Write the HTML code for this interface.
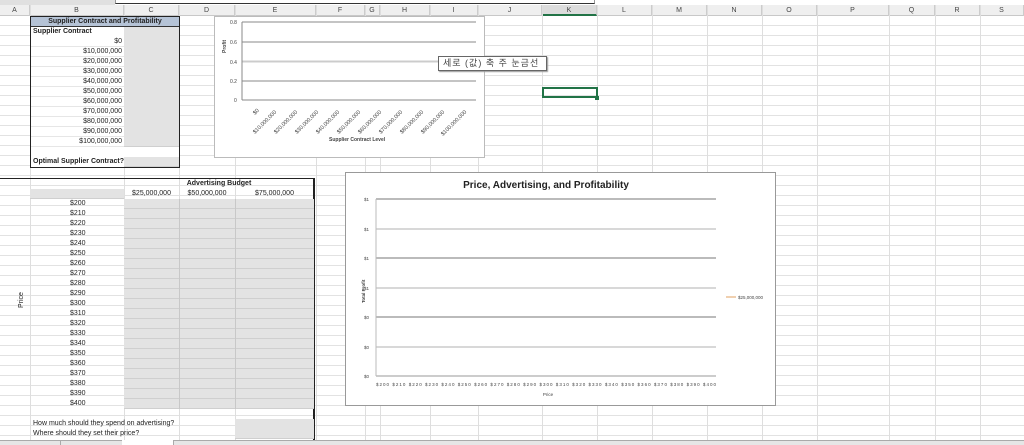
<!DOCTYPE html>
<html><head><meta charset="utf-8"><style>
*{margin:0;padding:0;box-sizing:border-box}
body{width:1024px;height:445px;overflow:hidden;position:relative;background:#fff;font-family:"Liberation Sans","Noto Sans CJK KR",sans-serif;font-size:7px;color:#222}
.a{position:absolute}
.grid{left:0;top:16px;width:1024px;height:424px;background:repeating-linear-gradient(to bottom,transparent 0,transparent 9px,#e2e2e2 9px,#e2e2e2 10px)}
.vl{position:absolute;top:5px;width:1px;height:435px;background:#dedede}
.hdr{left:0;top:5px;width:1024px;height:11px;background:#efefef;border-bottom:1px solid #c8c8c8}
.hc{position:absolute;top:5px;height:11px;font-size:7px;text-align:center;line-height:11px;color:#444;border-right:1px solid #ccc}
.g{background:#e3e3e3;border-bottom:1px solid #cfcfcf}
.r{text-align:right;font-size:7px;line-height:10px}
.c{text-align:center;font-size:7px;line-height:10px}
</style></head><body>
<div class="a hdr"></div>
<div class="a grid"></div>
<div class="hc" style="left:0;width:30px">A</div>
<div class="hc" style="left:30px;width:94px">B</div>
<div class="hc" style="left:124px;width:55px">C</div>
<div class="hc" style="left:179px;width:56px">D</div>
<div class="hc" style="left:235px;width:81px">E</div>
<div class="hc" style="left:316px;width:49px">F</div>
<div class="hc" style="left:365px;width:15px">G</div>
<div class="hc" style="left:380px;width:50px">H</div>
<div class="hc" style="left:430px;width:48px">I</div>
<div class="hc" style="left:478px;width:64px">J</div>
<div class="hc" style="left:542px;width:55px;background:#dcdcdc;border-bottom:2px solid #217346">K</div>
<div class="hc" style="left:597px;width:55px">L</div>
<div class="hc" style="left:652px;width:55px">M</div>
<div class="hc" style="left:707px;width:55px">N</div>
<div class="hc" style="left:762px;width:55px">O</div>
<div class="hc" style="left:817px;width:72px">P</div>
<div class="hc" style="left:889px;width:46px">Q</div>
<div class="hc" style="left:935px;width:45px">R</div>
<div class="hc" style="left:980px;width:44px">S</div>
<div class="vl" style="left:30px"></div><div class="vl" style="left:124px"></div><div class="vl" style="left:179px"></div><div class="vl" style="left:235px"></div><div class="vl" style="left:316px"></div><div class="vl" style="left:365px"></div><div class="vl" style="left:380px"></div><div class="vl" style="left:430px"></div><div class="vl" style="left:478px"></div><div class="vl" style="left:542px"></div><div class="vl" style="left:597px"></div><div class="vl" style="left:652px"></div><div class="vl" style="left:707px"></div><div class="vl" style="left:762px"></div><div class="vl" style="left:817px"></div><div class="vl" style="left:889px"></div><div class="vl" style="left:935px"></div><div class="vl" style="left:980px"></div>
<div class="a" style="left:115px;top:0;width:480px;height:4px;background:#fff;border-bottom:1px solid #333;border-left:1px solid #999;border-right:1px solid #999"></div>
<div class="a" style="left:0;top:0;width:115px;height:5px;background:#e0e0e0"></div>

<div class="a" style="left:30px;top:16px;width:150px;height:152px;background:#fff;border:1px solid #222"></div>
<div class="a" style="left:31px;top:17px;width:148px;height:10px;background:#b5c3d6;border-bottom:1px solid #333;font-weight:bold;text-align:center;line-height:10px;font-size:7px">Supplier Contract and Profitability</div>
<div class="a" style="left:31px;top:37px;width:93px;height:110px;background:repeating-linear-gradient(to bottom,transparent 0,transparent 9px,#e6e6e6 9px,#e6e6e6 10px)"></div>
<div class="a" style="left:33px;top:27px;font-weight:bold;line-height:10px">Supplier Contract</div>
<div class="a g" style="left:124px;top:27px;width:55px;height:120px"></div>
<div class="a g" style="left:124px;top:157px;width:55px;height:10px"></div>
<div class="a r" style="left:30px;top:37px;width:92px">$0<br>$10,000,000<br>$20,000,000<br>$30,000,000<br>$40,000,000<br>$50,000,000<br>$60,000,000<br>$70,000,000<br>$80,000,000<br>$90,000,000<br>$100,000,000</div>
<div class="a" style="left:33px;top:157px;font-weight:bold;line-height:10px">Optimal Supplier Contract?</div>

<div class="a" style="left:214px;top:16px;width:271px;height:142px;background:#fff;border:1px solid #bbb">
<svg width="271" height="142" style="position:absolute;left:0;top:0">
<g stroke="#888" stroke-width="1"><line x1="27" y1="5" x2="261" y2="5"/><line x1="27" y1="25" x2="261" y2="25"/><line x1="27" y1="44.5" x2="261" y2="44.5" stroke="#ccc" stroke-width="2"/><line x1="27" y1="64" x2="261" y2="64"/><line x1="27" y1="83" x2="261" y2="83"/><line x1="27" y1="5" x2="27" y2="83"/></g>
<g font-size="5" fill="#444" font-family="Liberation Sans"><text x="15" y="7">0.8</text><text x="15" y="27">0.6</text><text x="15" y="47">0.4</text><text x="15" y="66">0.2</text><text x="19" y="85">0</text>
<text transform="translate(11,36) rotate(-90)" font-weight="bold">Profit</text>
<text x="114" y="124" font-weight="bold">Supplier Contract Level</text>
<g font-size="5.5">
<text transform="translate(40,98) rotate(-45)">$0</text>
<text transform="translate(40,117) rotate(-45)">$10,000,000</text>
<text transform="translate(61,117) rotate(-45)">$20,000,000</text>
<text transform="translate(82,117) rotate(-45)">$30,000,000</text>
<text transform="translate(103,117) rotate(-45)">$40,000,000</text>
<text transform="translate(124,117) rotate(-45)">$50,000,000</text>
<text transform="translate(145,117) rotate(-45)">$60,000,000</text>
<text transform="translate(166,117) rotate(-45)">$70,000,000</text>
<text transform="translate(187,117) rotate(-45)">$80,000,000</text>
<text transform="translate(208,117) rotate(-45)">$90,000,000</text>
<text transform="translate(228,119) rotate(-45)">$100,000,000</text></g></g>
</svg></div>
<div class="a" style="left:438px;top:56px;width:109px;height:15px;background:#fff;border:1px solid #666;box-shadow:1px 1px 1px #999;font-size:9px;line-height:13px;padding-left:4px;color:#444;letter-spacing:1px">세로 (값) 축 주 눈금선</div>
<div class="a" style="left:542px;top:87px;width:56px;height:11px;border:2px solid #217346"></div>
<div class="a" style="left:595px;top:96px;width:4px;height:4px;background:#217346"></div>

<div class="a" style="left:0;top:178px;width:315px;height:262px;border-top:1px solid #222;border-right:2px solid #222"></div>
<div class="a" style="left:124px;top:179px;width:190px;text-align:center;font-weight:bold;line-height:10px">Advertising Budget</div>
<div class="a g" style="left:30px;top:189px;width:94px;height:10px"></div>
<div class="a c" style="left:124px;top:189px;width:55px">$25,000,000</div>
<div class="a c" style="left:179px;top:189px;width:56px">$50,000,000</div>
<div class="a c" style="left:235px;top:189px;width:79px">$75,000,000</div>
<div class="a" style="left:124px;top:199px;width:190px;height:210px;background:repeating-linear-gradient(to bottom,#e3e3e3 0,#e3e3e3 9px,#cfcfcf 9px,#cfcfcf 10px)"></div>
<div class="a" style="left:179px;top:199px;width:1px;height:210px;background:#c8c8c8"></div>
<div class="a" style="left:235px;top:199px;width:1px;height:210px;background:#c8c8c8"></div>
<div class="a" style="left:70px;top:199px;line-height:10px;font-size:7px">$200<br>$210<br>$220<br>$230<br>$240<br>$250<br>$260<br>$270<br>$280<br>$290<br>$300<br>$310<br>$320<br>$330<br>$340<br>$350<br>$360<br>$370<br>$380<br>$390<br>$400</div>
<div class="a" style="left:18px;top:308px;font-size:7px;transform:rotate(-90deg);transform-origin:left top">Price</div>
<div class="a" style="left:33px;top:419px;line-height:10px">How much should they spend on advertising?<br>Where should they set their price?</div>
<div class="a g" style="left:235px;top:419px;width:79px;height:20px"></div>

<div class="a" style="left:345px;top:172px;width:431px;height:234px;background:#fff;border:1px solid #999">
<svg width="431" height="234" style="position:absolute;left:0;top:0">
<g stroke-width="1"><line x1="30" y1="26" x2="370" y2="26" stroke="#777"/><line x1="30" y1="56" x2="370" y2="56" stroke="#ccc" stroke-width="1.5"/><line x1="30" y1="85" x2="370" y2="85" stroke="#777"/><line x1="30" y1="115" x2="370" y2="115" stroke="#ccc" stroke-width="1.5"/><line x1="30" y1="144" x2="370" y2="144" stroke="#777"/><line x1="30" y1="174" x2="370" y2="174" stroke="#ccc" stroke-width="1.5"/><line x1="30" y1="203" x2="370" y2="203" stroke="#999"/><line x1="30" y1="26" x2="30" y2="203" stroke="#bbb"/>
<line x1="380" y1="124" x2="390" y2="124" stroke="#e0a060"/></g>
<text x="200" y="15" font-size="10" font-weight="bold" text-anchor="middle" fill="#222" font-family="Liberation Sans">Price, Advertising, and Profitability</text>
<g font-size="4.5" fill="#444" font-family="Liberation Sans"><text x="18" y="28">$1</text><text x="18" y="58">$1</text><text x="18" y="87">$1</text><text x="18" y="117">$1</text><text x="18" y="146">$0</text><text x="18" y="176">$0</text><text x="18" y="205">$0</text>
<text transform="translate(19,130) rotate(-90)" font-weight="bold">Total Profit</text>
<text x="202" y="223" text-anchor="middle">Price</text>
<text x="392" y="126">$25,000,000</text>
<text x="30" y="213" textLength="340" lengthAdjust="spacing">$200 $210 $220 $230 $240 $250 $260 $270 $280 $290 $300 $310 $320 $330 $340 $350 $360 $370 $380 $390 $400</text></g>
</svg></div>
<div class="a" style="left:0;top:440px;width:122px;height:5px;background:#e6e6e6;border-top:1px solid #aaa"></div>
<div class="a" style="left:60px;top:440px;width:1px;height:5px;background:#aaa"></div>
<div class="a" style="left:173px;top:440px;width:851px;height:5px;background:#e6e6e6;border-top:1px solid #aaa;border-left:1px solid #aaa"></div>
</body></html>
